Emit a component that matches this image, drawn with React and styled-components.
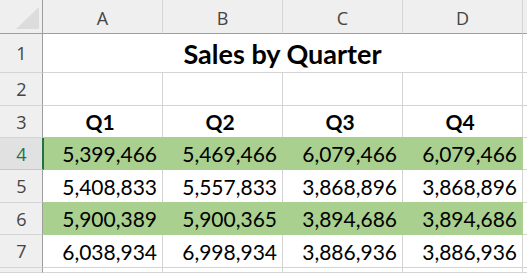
import React from 'react'
import styled, { createGlobalStyle } from 'styled-components'

const GRID = '#d4d4d4'
const FILL = '#a9d08e'
const ACCENT = '#217346'

const Global = createGlobalStyle`
  html, body {
    margin: 0;
    padding: 0;
    background: #ffffff;
    overflow: hidden;
  }
`

const Sheet = styled.div`
  display: grid;
  grid-template-columns: 43px repeat(4, 120px) 1fr;
  grid-template-rows: 34px 39px 33px 32px 32px 33px 32px 33px 1fr;
  width: 527px;
  height: 273px;
  font-family: Lato, 'Liberation Sans', sans-serif;
`

const Corner = styled.div`
  background: #efefef;
  border-right: 1px solid #9e9e9e;
  border-bottom: 1px solid #9e9e9e;
  display: flex;
  align-items: flex-end;
  justify-content: flex-end;
  padding: 0 3px 4px 0;
  box-sizing: border-box;
`

const ColHead = styled.div`
  background: #efefef;
  border-right: 1px solid ${GRID};
  border-bottom: 1px solid #9e9e9e;
  display: flex;
  align-items: center;
  justify-content: center;
  font-family: 'Open Sans', 'Noto Sans', sans-serif;
  font-size: 18px;
  color: #444;
  padding-top: 2px;
  box-sizing: border-box;
`

const RowHead = styled.div`
  background: ${p => (p.$active ? '#e1e1e1' : '#efefef')};
  border-right: ${p => (p.$active ? `2px solid ${ACCENT}` : '1px solid #9e9e9e')};
  margin-right: ${p => (p.$active ? '-1px' : '0')};
  border-bottom: 1px solid ${p => (p.$active ? '#c8c8c8' : GRID)};
  display: flex;
  align-items: center;
  justify-content: center;
  font-family: 'Open Sans', 'Noto Sans', sans-serif;
  font-size: 18px;
  color: ${p => (p.$active ? ACCENT : '#444')};
  padding-left: 1px;
  box-sizing: border-box;
  position: relative;
  z-index: 1;
`

const Cell = styled.div`
  background: ${p => (p.$fill ? FILL : '#fff')};
  border-right: 1px solid ${p => (p.$fill ? FILL : GRID)};
  border-bottom: 1px solid ${p => (p.$fill ? FILL : GRID)};
  box-shadow: ${p => (p.$fill ? `0 -1px 0 ${FILL}` : 'none')};
  display: flex;
  align-items: center;
  justify-content: ${p => (p.$center ? 'center' : 'flex-end')};
  padding: 0 5px 0 0;
  font-size: 21px;
  font-weight: ${p => (p.$bold ? 700 : 400)};
  color: #000;
  box-sizing: border-box;
  white-space: nowrap;
`

const Title = styled(Cell)`
  grid-column: 2 / span 4;
  justify-content: center;
  font-size: 27px;
  font-weight: 700;
  padding: 0;
  padding-top: 1px;
`

const Spare = styled.div`
  background: ${p => (p.$head ? '#efefef' : '#fff')};
  border-bottom: 1px solid ${p => (p.$head ? '#9e9e9e' : GRID)};
  box-sizing: border-box;
`

const cols = ['A', 'B', 'C', 'D']

const rows = [
  { n: 4, fill: true, values: ['5,399,466', '5,469,466', '6,079,466', '6,079,466'] },
  { n: 5, values: ['5,408,833', '5,557,833', '3,868,896', '3,868,896'] },
  { n: 6, fill: true, values: ['5,900,389', '5,900,365', '3,894,686', '3,894,686'] },
  { n: 7, values: ['6,038,934', '6,998,934', '3,886,936', '3,886,936'] },
]

export default function App() {
  return (
    <>
      <Global />
      <Sheet>
        <Corner>
          <svg width="23" height="22" viewBox="0 0 23 22">
            <polygon points="23,0 23,22 0,22" fill="#dcdcdc" />
          </svg>
        </Corner>
        {cols.map(c => (
          <ColHead key={c}>{c}</ColHead>
        ))}
        <Spare $head />

        <RowHead>1</RowHead>
        <Title>Sales by Quarter</Title>
        <Spare />

        <RowHead>2</RowHead>
        {cols.map(c => (
          <Cell key={c} />
        ))}
        <Spare />

        <RowHead>3</RowHead>
        {['Q1', 'Q2', 'Q3', 'Q4'].map(q => (
          <Cell key={q} $bold $center>
            {q}
          </Cell>
        ))}
        <Spare />

        {rows.map(r => (
          <React.Fragment key={r.n}>
            <RowHead $active={r.n === 4}>{r.n}</RowHead>
            {r.values.map((v, i) => (
              <Cell key={i} $fill={r.fill}>
                {v}
              </Cell>
            ))}
            <Spare />
          </React.Fragment>
        ))}

        <RowHead />
        {cols.map(c => (
          <Cell key={c} />
        ))}
        <Spare />
      </Sheet>
    </>
  )
}
